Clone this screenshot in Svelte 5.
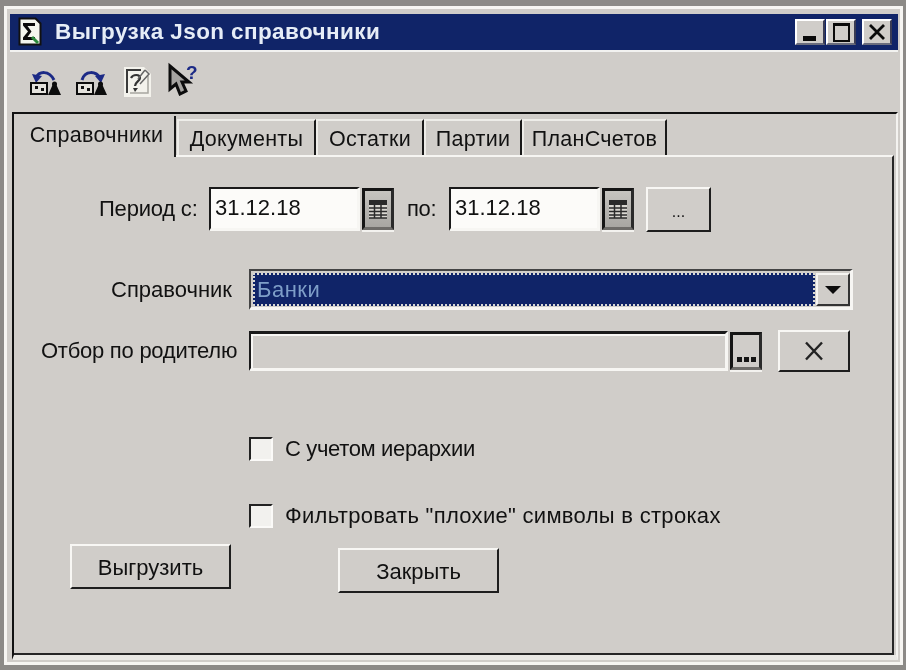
<script>
  const tabs = ['Документы', 'Остатки', 'Партии', 'ПланСчетов'];
</script>

{#snippet calendar()}
  <svg width="20" height="20" viewBox="0 0 20 20">
    <rect x="1" y="1" width="18" height="18" fill="#d8d6d0"/>
    <rect x="1" y="1" width="18" height="5" fill="#2a2a2a"/>
    <path d="M1 9h18M1 12.500h18M1 16h18M6.500 6v13M13 6v13M1 19h18" stroke="#2a2a2a" stroke-width="1.500"/>
  </svg>
{/snippet}

<div class="screen">
  <div class="win">
    <div class="titlebar">
      <svg class="app-icon" width="24" height="30" viewBox="0 0 24 30">
        <path d="M1.500 1.500h16l5 5v21h-21z" fill="#f4f6ee" stroke="#111" stroke-width="2"/>
        <path d="M5 6h12v3H9.500l4 5.500-4 5.500H17v3H5v-2.500l5-6-5-6z" fill="#0a0a0a"/>
        <path d="M14 20l6 6" stroke="#2c8a3c" stroke-width="3"/>
      </svg>
      <span class="title">Выгрузка Json справочники</span>
      <div class="caption">
        <button class="cap" aria-label="Свернуть"><span class="min"></span></button>
        <button class="cap" aria-label="Развернуть"><span class="max"></span></button>
        <button class="cap close" aria-label="Закрыть окно">
          <svg width="20" height="18" viewBox="0 0 20 18"><path d="M3 2l14 14M17 2L3 16" stroke="#0a0a0a" stroke-width="2.800"/></svg>
        </button>
      </div>
    </div>

    <div class="toolbar">
      <svg class="tool" width="31" height="26" viewBox="0 0 31 26">
        <path d="M6 9C9 2 19 1 24 11" fill="none" stroke="#1c2a86" stroke-width="3"/>
        <path d="M2 5l10 2-6 7z" fill="#1c2a86"/>
        <rect x="0" y="13" width="18" height="13" fill="#0c0c0c"/>
        <rect x="2" y="15" width="14" height="9" fill="#e4e2dc"/>
        <rect x="5" y="17" width="3" height="3" fill="#111"/><rect x="11" y="19" width="3" height="3" fill="#111"/>
        <circle cx="24.500" cy="15" r="2.500" fill="#0c0c0c"/>
        <path d="M23 15h3l5 11H18z" fill="#0c0c0c"/>
      </svg>
      <svg class="tool" width="31" height="26" viewBox="0 0 31 26">
        <path d="M6 11C9 1 20 2 24 9" fill="none" stroke="#1c2a86" stroke-width="3"/>
        <path d="M29 5l-10 2 6 7z" fill="#1c2a86"/>
        <rect x="0" y="13" width="18" height="13" fill="#0c0c0c"/>
        <rect x="2" y="15" width="14" height="9" fill="#e4e2dc"/>
        <rect x="5" y="17" width="3" height="3" fill="#111"/><rect x="11" y="19" width="3" height="3" fill="#111"/>
        <circle cx="24.500" cy="15" r="2.500" fill="#0c0c0c"/>
        <path d="M23 15h3l5 11H18z" fill="#0c0c0c"/>
      </svg>
      <svg class="tool doc" width="27" height="30" viewBox="0 0 27 30">
        <path d="M0 0h20l7 7v23H0z" fill="#f3f2ec"/>
        <path d="M3 26V3h14" stroke="#3a3a3a" stroke-width="2" fill="none"/>
        <path d="M24 9v17H6" stroke="#a8a6a0" stroke-width="1.500" fill="none"/>
        <path d="M7 11c2-4 9-4 9 0 0 3-5 4-5 8" fill="none" stroke="#333" stroke-width="2.200"/>
        <path d="M9 21l5 0-3 4z" fill="#333"/>
        <path d="M21 3l-7 9M21 3l4 4-9 10" stroke="#666" stroke-width="1.500" fill="none"/>
      </svg>
      <svg class="tool arrow" width="34" height="36" viewBox="0 -4 34 36">
        <path d="M2 2v23l6-5 4 10 6-3-4-9h7z" fill="#a5a3a0" stroke="#0c0c0c" stroke-width="3"/>
        <text x="18" y="15" class="qm">?</text>
      </svg>
    </div>

    <div class="frame">
      <div class="tabs">
        <div class="tab active">Справочники</div>
        {#each tabs as t}
          <div class="tab">{t}</div>
        {/each}
      </div>
      <div class="page">
        <div class="row period">
          <span class="lbl lbl-from">Период с:</span>
          <div class="input date">31.12.18</div>
          <button class="pick" aria-label="Календарь">{@render calendar()}</button>
          <span class="lbl lbl-to">по:</span>
          <div class="input date">31.12.18</div>
          <button class="pick" aria-label="Календарь">{@render calendar()}</button>
          <button class="btn dots">...</button>
        </div>

        <div class="row combo-row">
          <span class="lbl lbl-ref">Справочник</span>
          <div class="combo">
            <div class="selected">Банки</div>
            <button class="drop" aria-label="Открыть"><span class="tri"></span></button>
          </div>
        </div>

        <div class="row filter-row">
          <span class="lbl lbl-parent">Отбор по родителю</span>
          <div class="input field"></div>
          <button class="pick small" aria-label="Выбрать"><span class="ell"><i></i><i></i><i></i></span></button>
          <button class="btn clear" aria-label="Очистить">
            <svg width="20" height="20" viewBox="0 0 20 20"><path d="M2 1.500l16 17M18 1.500l-16 17" stroke="#222" stroke-width="2.400"/></svg>
          </button>
        </div>

        <label class="check first"><span class="box"></span><span class="t1">С учетом иерархии</span></label>
        <label class="check second"><span class="box"></span><span class="t2">Фильтровать "плохие" символы в строках</span></label>

        <div class="actions">
          <button class="btn action">Выгрузить</button>
          <button class="btn action shut">Закрыть</button>
        </div>
      </div>
    </div>
  </div>
</div>

<style>
  :global(body) { margin: 0; background: #8c8a87; }
  .screen {
    width: 906px; height: 670px; box-sizing: border-box;
    padding: 6px 3px 5px 4px;
    font-family: "Liberation Sans", Arial, sans-serif;
    font-size: 22px; color: #111;
    filter: blur(0.45px);
    overflow: hidden;
  }
  .win {
    height: 100%; box-sizing: border-box;
    background: #d0cdc9;
    border: 3px solid #f6f5f2;
    padding: 5px 2px 2px 3px;
    display: flex; flex-direction: column;
  }
  .titlebar {
    height: 38px; box-sizing: border-box; flex: none;
    background: #102468;
    border-bottom: 2px solid #f2f2f0;
    display: flex; align-items: center;
    padding-left: 8px; padding-right: 6px;
  }
  .app-icon { flex: none; }
  .title {
    margin-left: 13px;
    font-weight: bold; font-size: 22.500px; letter-spacing: 0.4px;
    color: #e6edf7;
  }
  .caption { margin-left: auto; display: flex; gap: 1px; }
  .cap {
    width: 30px; height: 26px; padding: 0; box-sizing: border-box;
    background: #d0cdc9;
    border: 0; border-top: 2px solid #fff; border-left: 2px solid #fff;
    border-bottom: 2px solid #6a6c7c; border-right: 2px solid #3a3c54;
    display: flex; align-items: center; justify-content: center;
  }
  .close { margin-left: 5px; }
  .min { width: 13px; height: 5px; background: #0a0a0a; align-self: flex-end; margin-bottom: 2px; margin-right: 1px; }
  .max { width: 17px; height: 19px; box-sizing: border-box; border: 2px solid #0a0a0a; border-top-width: 3px; }

  .toolbar {
    height: 60px; flex: none; box-sizing: border-box;
    display: flex; align-items: center;
    padding-left: 20px;
  }
  .tool { flex: none; }
  .tool + .tool { margin-left: 15px; }
  .tool.doc { margin-left: 17px; }
  .tool.arrow { margin-left: 17px; margin-top: -9px; }
  .qm { font: bold 19px "Liberation Sans", sans-serif; fill: #1c2a86; }

  .frame {
    flex: 1; margin-left: 2px; box-sizing: border-box;
    border-top: 2px solid #111; border-left: 2px solid #111;
    border-right: 2px solid #f4f3f0; border-bottom: 5px solid #e9e8e4;
    padding-top: 2px; padding-right: 2px;
    display: flex; flex-direction: column;
  }
  .tabs { height: 39px; flex: none; display: flex; align-items: flex-end; }
  .tab {
    height: 36px; box-sizing: border-box;
    border-top: 2px solid #eeede9; border-left: 2px solid #eeede9;
    border-right: 2px solid #1a1a1a;
    display: flex; align-items: center; justify-content: center;
    font-size: 21.500px; letter-spacing: 0.3px;
    width: 108px; padding-top: 2px;
  }
  .tab:nth-child(2) { width: 139px; margin-left: 1px; }
  .tab:nth-child(4) { width: 98px; }
  .tab:nth-child(5) { width: 145px; }
  .tab.active {
    width: 162px; height: 41px; margin-bottom: -2px; position: relative; z-index: 1;
    background: #d0cdc9; padding: 0 0 2px 5px;
    border-left: 0; border-top: 0;
  }
  .page {
    flex: 1; box-sizing: border-box;
    border-top: 2px solid #f6f5f2;
    border-right: 2px solid #262626; border-bottom: 2px solid #262626;
    display: flex; flex-direction: column;
  }
  .row { display: flex; align-items: center; flex: none; }
  .period { margin-top: 29px; height: 46px; padding-left: 85px; }
  .lbl { flex: none; }
  .lbl-from { width: 110px; letter-spacing: -0.2px; }
  .lbl-to { width: 42px; margin-left: 13px; letter-spacing: -0.3px; }
  .lbl-ref { width: 138px; margin-left: 97px; }
  .lbl-parent { width: 208px; margin-left: 27px; letter-spacing: -0.25px; }
  .input {
    box-sizing: border-box; flex: none;
    border-top: 2px solid #1a1a1a; border-left: 2px solid #1a1a1a;
    border-bottom: 3px solid #f7f6f3; border-right: 3px solid #f7f6f3;
  }
  .date {
    width: 151px; height: 44px; background: #fcfbf9;
    padding-left: 4px; line-height: 37px; font-size: 22px;
  }
  .pick {
    flex: none; box-sizing: border-box; width: 32px; height: 42px; margin-left: 2px; padding: 0;
    background: linear-gradient(#c6c4c0, #a8a6a2);
    border: 3px solid #151515; border-bottom-color: #6e6c69; border-right-color: #2a2a2a;
    box-shadow: 0 2px 0 #f3f2ef;
    display: flex; align-items: center; justify-content: center;
  }
  .btn {
    box-sizing: border-box; padding: 0; flex: none;
    font: inherit; color: inherit;
    background: #d0cdc9;
    border: 2px solid #f8f7f4;
    border-right-color: #1e1e1e; border-bottom-color: #1e1e1e;
    display: flex; align-items: center; justify-content: center;
  }
  .dots { width: 65px; height: 45px; margin-left: 12px; font-size: 16px; padding-top: 6px; }

  .combo-row { margin-top: 37px; height: 41px; }
  .combo {
    width: 604px; height: 41px; box-sizing: border-box;
    border-top: 2px solid #444; border-left: 2px solid #444;
    border-bottom: 3px solid #f7f6f3; border-right: 3px solid #f7f6f3;
    display: flex; align-items: stretch;
    padding: 2px 0 1px 2px;
  }
  .selected {
    flex: 1; box-sizing: border-box;
    background: #102468; color: #7e9ec8;
    border: 2px dotted #d8d8d4;
    font-size: 22px; line-height: 29px; padding-left: 2px; letter-spacing: 0.5px;
  }
  .drop {
    flex: none; width: 34px; padding: 0; margin-left: 1px; box-sizing: border-box;
    background: #d0cdc9;
    border: 2px solid #f6f5f2; border-right-color: #333; border-bottom-color: #333;
    display: flex; align-items: center; justify-content: center;
  }
  .tri { width: 0; height: 0; border: 8px solid transparent; border-top: 8px solid #0c0c0c; border-bottom: 0; }

  .filter-row { margin-top: 20px; height: 42px; }
  .field {
    width: 479px; height: 40px; background: #d0cdc9;
    border-top-width: 3px; border-left-width: 2px;
    box-shadow: inset 2px 0 0 #f7f6f3, inset 0 2px 0 #f7f6f3;
  }
  .small {
    height: 38px; background: #d0cdc9; border-left-width: 3px;
    align-items: flex-end; padding-bottom: 5px;
  }
  .ell { display: flex; gap: 2px; }
  .ell i { width: 5px; height: 5px; background: #141414; }
  .clear { width: 72px; height: 42px; margin-left: 16px; }

  .check { display: flex; align-items: center; flex: none; height: 24px; padding-left: 235px; gap: 12px; }
  .check.first { margin-top: 65px; }
  .check.second { margin-top: 43px; }
  .t1 { letter-spacing: -0.35px; }
  .t2 { letter-spacing: 0.3px; }
  .box {
    width: 24px; height: 24px; box-sizing: border-box; background: #f2f1ee; flex: none;
    border-top: 2px solid #222; border-left: 2px solid #222;
    border-bottom: 2px solid #fbfaf8; border-right: 2px solid #fbfaf8;
  }
  .actions {
    margin-top: 16px; height: 49px; flex: none;
    display: flex; align-items: flex-start; padding-left: 56px;
  }
  .action { width: 161px; height: 45px; padding-top: 2px; }
  .shut { margin-left: 107px; margin-top: 4px; }
</style>
